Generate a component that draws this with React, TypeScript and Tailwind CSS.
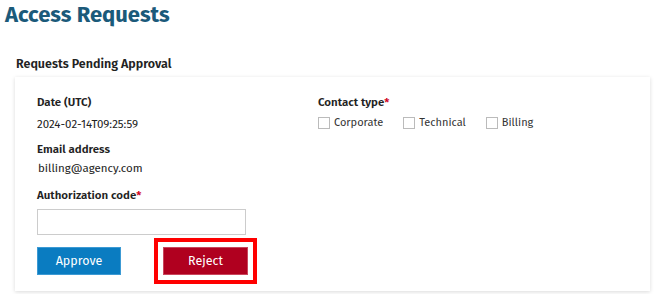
import React from "react";

const font = { fontFamily: '"Fira Sans", "Noto Sans", "Open Sans", sans-serif' };

function Check({ label }: { label: string }) {
  return (
    <label className="flex items-center gap-[4px] text-[11px] text-[#333]">
      <span className="w-[12px] h-[12px] border border-[#bbb] bg-white inline-block" />
      <span>{label}</span>
    </label>
  );
}

export default function App() {
  return (
    <div className="w-[661px] h-[294px] bg-white overflow-hidden" style={font}>
      <h1 className="pl-[5px] pt-[2px] text-[22px] leading-[26px] font-bold text-[#1b5a7a]">Access Requests</h1>
      <h2 className="pl-[16px] mt-[28px] text-[12.5px] leading-[16px] font-semibold text-[#222]">Requests Pending Approval</h2>
      <div className="ml-[15px] mt-[5px] w-[635px] h-[214px] bg-white shadow-[0_1px_4px_rgba(0,0,0,0.15)] pl-[22px] pt-[18px] flex">
        <div className="w-[281px] flex flex-col">
          <div className="text-[11.5px] leading-[14px] font-semibold text-[#222]">Date (UTC)</div>
          <div className="mt-[8px] text-[11.5px] leading-[14px] text-[#222]">2024-02-14T09:25:59</div>
          <div className="mt-[11px] text-[11.5px] leading-[14px] font-semibold text-[#222]">Email address</div>
          <div className="mt-[5px] pl-[1px] text-[11.5px] leading-[14px] text-[#222]">billing@agency.com</div>
          <div className="mt-[13px] text-[11.5px] leading-[14px] font-semibold text-[#222]">
            Authorization code<span className="text-[#d0021b]">*</span>
          </div>
          <input className="mt-[7px] w-[209px] h-[26px] border border-[#ccc] bg-white outline-none" />
          <div className="mt-[12px] flex items-start">
            <button className="w-[84px] h-[28px] bg-[#0a7cc1] text-white text-[12.5px] border border-[#3c9ad4]">Approve</button>
            <div className="ml-[33px] -mt-[9px] border-4 border-[#ff0000] p-[5px]">
              <button className="w-[85px] h-[28px] bg-[#b0001f] text-white text-[12.5px] border border-[#c9455c] block">Reject</button>
            </div>
          </div>
        </div>
        <div className="flex flex-col">
          <div className="text-[11.5px] leading-[14px] font-semibold text-[#222]">
            Contact type<span className="text-[#d0021b]">*</span>
          </div>
          <div className="mt-[6px] flex gap-[20px]">
            <Check label="Corporate" />
            <Check label="Technical" />
            <Check label="Billing" />
          </div>
        </div>
      </div>
    </div>
  );
}
